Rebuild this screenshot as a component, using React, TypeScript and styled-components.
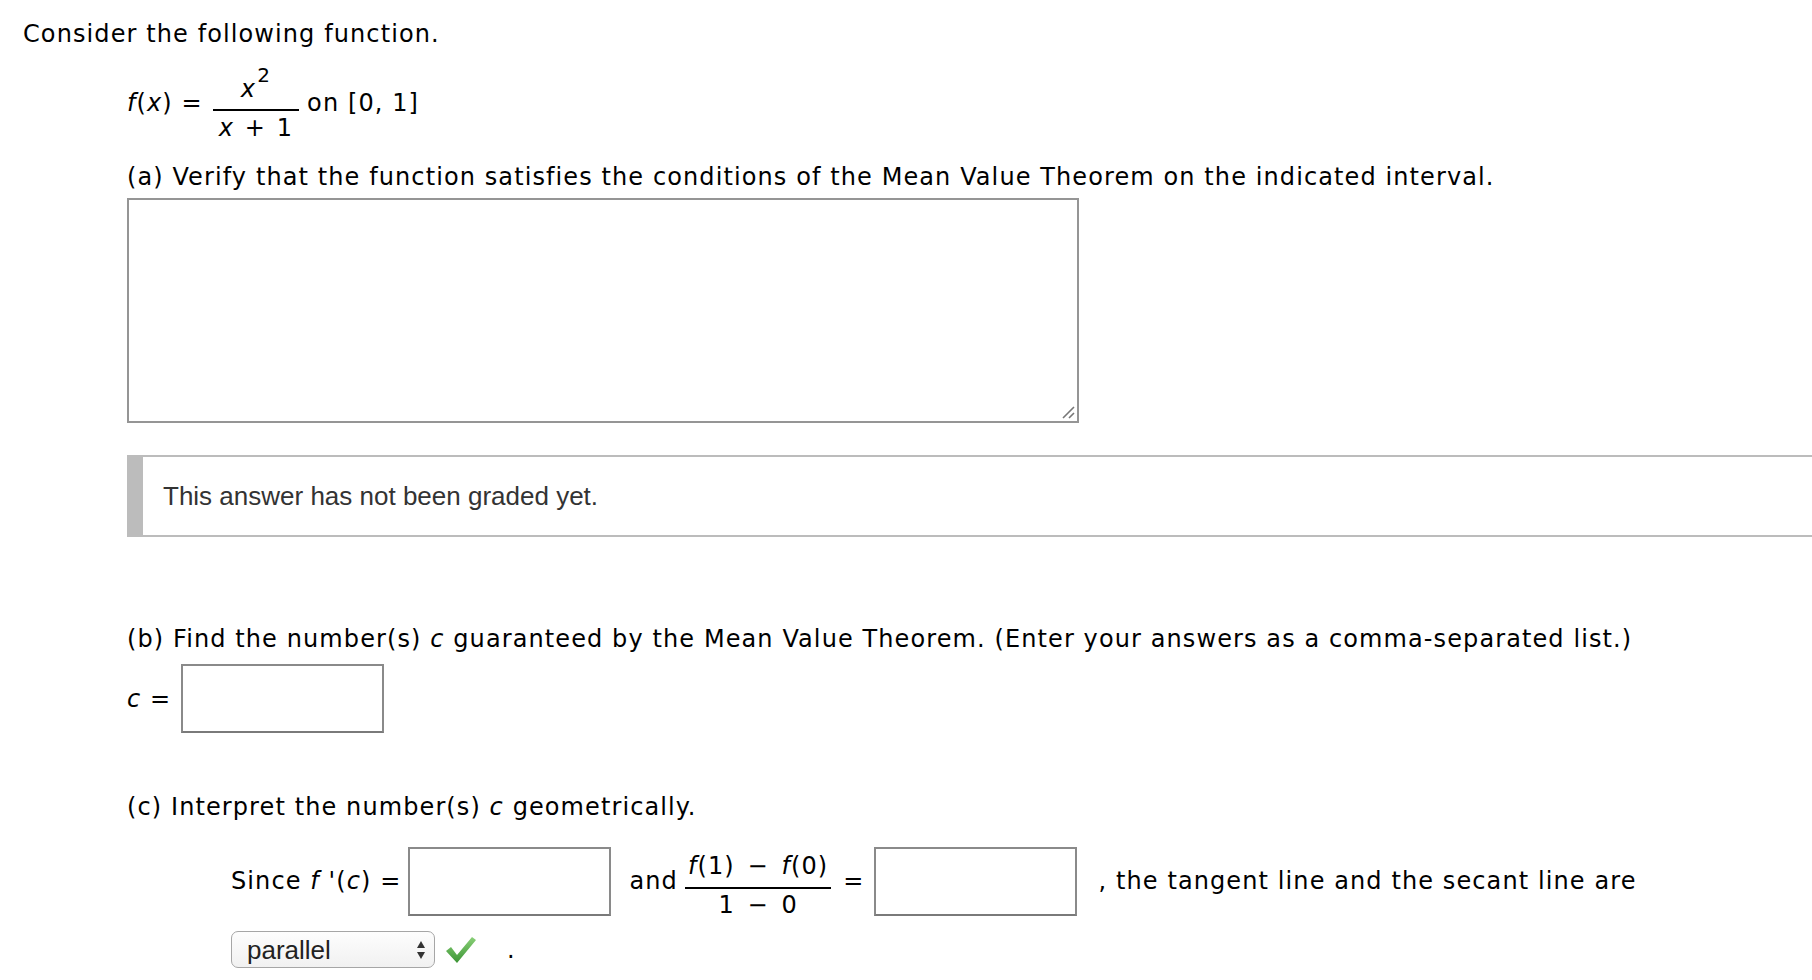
import React from "react";
import styled, { createGlobalStyle } from "styled-components";

const Global = createGlobalStyle`
  html, body {
    margin: 0;
    padding: 0;
    background: #fff;
    overflow: hidden;
  }
  body {
    font-family: "DejaVu Sans", Verdana, sans-serif;
    color: #000;
  }
`;

const Page = styled.div`
  padding: 20px 0 0 23px;
  font-size: 24px;
  line-height: 28px;
  letter-spacing: 1.1px;
`;

const Title = styled.div`
  margin: 0;
`;

const Indent = styled.div`
  padding-left: 104px;
  display: flex;
  flex-direction: column;
`;

const MathRow = styled.div<{ $top?: number; $pad?: number }>`
  display: flex;
  align-items: center;
  margin-top: ${(p) => p.$top ?? 0}px;
  padding-left: ${(p) => p.$pad ?? 0}px;
  white-space: nowrap;
`;

const Word = styled.span<{ $ml?: number; $lift?: number }>`
  margin-left: ${(p) => p.$ml ?? 0}px;
  margin-bottom: ${(p) => (p.$lift ?? 0) * 2}px;
`;

const I = styled.span`
  font-style: italic;
`;

const Frac = styled.span<{
  $ml?: number;
  $drop?: number;
  $gapTop: number;
  $gapBottom: number;
  $pad: number;
  $ws?: number;
}>`
  display: inline-flex;
  flex-direction: column;
  align-items: stretch;
  text-align: center;
  margin-left: ${(p) => p.$ml ?? 0}px;
  margin-top: ${(p) => (p.$drop ?? 0) * 2}px;
  word-spacing: ${(p) => p.$ws ?? 0}px;

  & > span:first-child {
    padding: 0 ${(p) => p.$pad}px ${(p) => p.$gapTop}px;
    border-bottom: 2px solid #000;
  }
  & > span:last-child {
    padding: ${(p) => p.$gapBottom}px ${(p) => p.$pad}px 0;
  }
`;

const Sup = styled.sup`
  font-size: 20px;
  line-height: 0;
  vertical-align: baseline;
  position: relative;
  top: -15px;
  margin-left: 1px;
`;

const Prompt = styled.div<{ $top: number }>`
  margin-top: ${(p) => p.$top}px;
`;

const Area = styled.div`
  position: relative;
  margin-top: 7px;
  width: 952px;
  height: 225px;
  box-sizing: border-box;
  border: 2px solid #959595;
  background: #fff;
`;

const Grip = styled.svg`
  position: absolute;
  right: 2px;
  bottom: 2px;
`;

const Graded = styled.div`
  margin-top: 32px;
  height: 82px;
  width: calc(100vw - 127px);
  box-sizing: border-box;
  border-top: 2px solid #bcbcbc;
  border-bottom: 2px solid #bcbcbc;
  border-left: 16px solid #bcbcbc;
  display: flex;
  align-items: center;
  padding-left: 20px;
  font-family: "Liberation Sans", Arial, sans-serif;
  font-size: 26px;
  letter-spacing: 0;
  color: #333;
`;

const Blank = styled.div<{ $ml?: number }>`
  width: 203px;
  height: 69px;
  margin-left: ${(p) => p.$ml ?? 0}px;
  box-sizing: border-box;
  border: 2px solid #8a8a8a;
  border-bottom-color: #7a7a7a;
  background: #fff;
`;

const Select = styled.div`
  width: 204px;
  height: 37px;
  box-sizing: border-box;
  border: 1px solid #a6a6a6;
  border-radius: 7px;
  background: linear-gradient(#fdfdfd, #f1f1f1);
  display: flex;
  align-items: center;
  justify-content: space-between;
  padding: 0 8px 0 15px;
  font-family: "Liberation Sans", Arial, sans-serif;
  font-size: 26px;
  letter-spacing: 0;
  color: #222;
`;

const Arrows = styled.svg`
  display: block;
`;

const Check = styled.svg`
  display: block;
  margin-left: 10px;
`;

export default function App() {
  return (
    <>
      <Global />
      <Page>
        <Title>Consider the following function.</Title>
        <Indent>
          <MathRow $top={27}>
            <Word $lift={6}>
              <I>f</I>(<I>x</I>) =
            </Word>
            <Frac $ml={10} $gapTop={6} $gapBottom={3} $pad={6} $ws={2}>
              <span>
                <I>x</I>
                <Sup>2</Sup>
              </span>
              <span>
                <I>x</I> + 1
              </span>
            </Frac>
            <Word $ml={8} $lift={6}>
              on [0, 1]
            </Word>
          </MathRow>

          <Prompt $top={21}>
            (a) Verify that the function satisfies the conditions of the Mean Value Theorem on the indicated interval.
          </Prompt>
          <Area>
            <Grip width="14" height="14" viewBox="0 0 14 14">
              <path d="M2 13 L13 2 M8 13 L13 8" stroke="#777" strokeWidth="1.6" />
            </Grip>
          </Area>

          <Graded>This answer has not been graded yet.</Graded>

          <Prompt $top={88}>
            (b) Find the number(s) <I>c</I> guaranteed by the Mean Value Theorem. (Enter your answers as a
            comma-separated list.)
          </Prompt>
          <MathRow $top={11}>
            <Word>
              <I>c</I> =
            </Word>
            <Blank $ml={10} />
          </MathRow>

          <Prompt $top={60}>
            (c) Interpret the number(s) <I>c</I> geometrically.
          </Prompt>
          <MathRow $top={22} $pad={104}>
            <Word>
              Since <I>f</I> '(<I>c</I>) =
            </Word>
            <Blank $ml={7} />
            <Word $ml={18}>and</Word>
            <Frac $ml={7} $drop={4.5} $gapTop={7} $gapBottom={2} $pad={3} $ws={4}>
              <span>
                <I>f</I>(1) − <I>f</I>(0)
              </span>
              <span>1 − 0</span>
            </Frac>
            <Word $ml={12}>=</Word>
            <Blank $ml={9} />
            <Word $ml={22}>, the tangent line and the secant line are</Word>
          </MathRow>
          <MathRow $top={12} $pad={104}>
            <Select>
              <span>parallel</span>
              <Arrows width="10" height="20" viewBox="0 0 10 20">
                <path d="M5 1 L9 8 L1 8 Z" fill="#333" />
                <path d="M5 19 L9 12 L1 12 Z" fill="#333" />
              </Arrows>
            </Select>
            <Check width="32" height="28" viewBox="0 0 32 28">
              <defs>
                <linearGradient id="g" x1="0" y1="0" x2="0" y2="1">
                  <stop offset="0" stopColor="#8ad078" />
                  <stop offset="1" stopColor="#3b9434" />
                </linearGradient>
              </defs>
              <path d="M1 15 L6 11 L12 19 L27 1 L31 4 L12 27 Z" fill="url(#g)" />
            </Check>
            <Word $ml={30}>.</Word>
          </MathRow>
        </Indent>
      </Page>
    </>
  );
}
